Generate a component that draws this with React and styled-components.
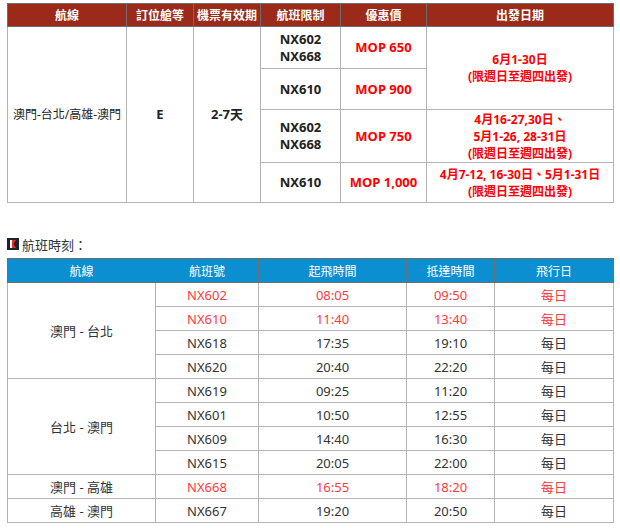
import React from 'react';
import styled, { createGlobalStyle } from 'styled-components';

const GlobalStyle = createGlobalStyle`
    body {
        margin: 0;
        background: #fff;
        font-family: "Noto Sans", Tahoma, "Noto Sans CJK TC", sans-serif;
        color: #333;
    }
`;

const Page = styled.div`
    padding: 3px 7px 0 7px;
    width: 606px;
`;

const Table = styled.table`
    width: 606px;
    border-collapse: collapse;
    table-layout: fixed;
    font-size: 12px;
    & td, & th {
        border: 1px solid #b3b3b3;
        text-align: center;
        vertical-align: middle;
        padding: 0;
    }
`;

const HeadCell = styled.th`
    background: ${p => p.$bg};
    color: #fff;
    font-weight: ${p => (p.$bold ? 700 : 400)};
    height: ${p => p.$h}px;
    border-color: #6e6e6e !important;
    font-size: 12px;
`;

const FareCell = styled.td`
    height: ${p => p.$h || 0}px;
    font-weight: ${p => (p.$plain ? 400 : 700)};
    font-size: ${p => (p.$big ? 13 : 12)}px;
    line-height: 17px;
    color: ${p => (p.$red ? '#ff0000' : '#222')};
`;

const Cell = styled.td`
    height: 23px;
    font-size: 13px;
    color: ${p => (p.$red ? '#ff3a3a' : '#333')};
`;

const Title = styled.div`
    display: flex;
    align-items: center;
    gap: 3px;
    margin: 33px 0 6px 0;
    font-size: 13px;
    color: #333;
    height: 16px;
`;

const Logo = () => (
    <svg width="12" height="12" viewBox="0 0 12 12">
        <rect width="12" height="12" fill="#1b2333" />
        <path d="M3 2 L9 2 L6.5 6 L9 10 L3 10 Z" fill="#e52a2a" />
        <path d="M3 2 L5 2 L5 10 L3 10 Z" fill="#fff" />
    </svg>
);

const fareCols = [119, 67, 67, 80, 86, 187];
const schedCols = [148, 103, 148, 88, 119];

const schedule = [
    { route: '澳門 - 台北', span: 4, no: 'NX602', dep: '08:05', arr: '09:50', red: true },
    { no: 'NX610', dep: '11:40', arr: '13:40', red: true },
    { no: 'NX618', dep: '17:35', arr: '19:10' },
    { no: 'NX620', dep: '20:40', arr: '22:20' },
    { route: '台北 - 澳門', span: 4, no: 'NX619', dep: '09:25', arr: '11:20' },
    { no: 'NX601', dep: '10:50', arr: '12:55' },
    { no: 'NX609', dep: '14:40', arr: '16:30' },
    { no: 'NX615', dep: '20:05', arr: '22:00' },
    { route: '澳門 - 高雄', span: 1, no: 'NX668', dep: '16:55', arr: '18:20', red: true },
    { route: '高雄 - 澳門', span: 1, no: 'NX667', dep: '19:20', arr: '20:50' },
];

export default function App() {
    return (
        <Page>
            <GlobalStyle />
            <Table>
                <colgroup>
                    {fareCols.map((w, i) => <col key={i} style={{ width: w }} />)}
                </colgroup>
                <thead>
                    <tr>
                        {['航線', '訂位艙等', '機票有效期', '航班限制', '優惠價', '出發日期'].map(h => (
                            <HeadCell key={h} $bg="#9b2a1a" $bold $h={22}>{h}</HeadCell>
                        ))}
                    </tr>
                </thead>
                <tbody>
                    <tr>
                        <FareCell rowSpan={4} $plain>澳門-台北/高雄-澳門</FareCell>
                        <FareCell rowSpan={4} $big>E</FareCell>
                        <FareCell rowSpan={4} $big>2-7天</FareCell>
                        <FareCell $h={41} $big>NX602<br />NX668</FareCell>
                        <FareCell $big $red>MOP 650</FareCell>
                        <FareCell rowSpan={2} $red>6月1-30日<br />(限週日至週四出發)</FareCell>
                    </tr>
                    <tr>
                        <FareCell $h={40} $big>NX610</FareCell>
                        <FareCell $big $red>MOP 900</FareCell>
                    </tr>
                    <tr>
                        <FareCell $h={52} $big>NX602<br />NX668</FareCell>
                        <FareCell $big $red>MOP 750</FareCell>
                        <FareCell $red>4月16-27,30日、<br />5月1-26, 28-31日<br />(限週日至週四出發)</FareCell>
                    </tr>
                    <tr>
                        <FareCell $h={39} $big>NX610</FareCell>
                        <FareCell $big $red>MOP 1,000</FareCell>
                        <FareCell $red>4月7-12, 16-30日、5月1-31日<br />(限週日至週四出發)</FareCell>
                    </tr>
                </tbody>
            </Table>

            <Title><Logo />航班時刻：</Title>

            <Table>
                <colgroup>
                    {schedCols.map((w, i) => <col key={i} style={{ width: w }} />)}
                </colgroup>
                <thead>
                    <tr>
                        {['航線', '航班號', '起飛時間', '抵達時間', '飛行日'].map(h => (
                            <HeadCell key={h} $bg="#0b8fd1" $h={23}>{h}</HeadCell>
                        ))}
                    </tr>
                </thead>
                <tbody>
                    {schedule.map(r => (
                        <tr key={r.no}>
                            {r.route && <Cell rowSpan={r.span}>{r.route}</Cell>}
                            <Cell $red={r.red}>{r.no}</Cell>
                            <Cell $red={r.red}>{r.dep}</Cell>
                            <Cell $red={r.red}>{r.arr}</Cell>
                            <Cell $red={r.red}>每日</Cell>
                        </tr>
                    ))}
                </tbody>
            </Table>
        </Page>
    );
}
